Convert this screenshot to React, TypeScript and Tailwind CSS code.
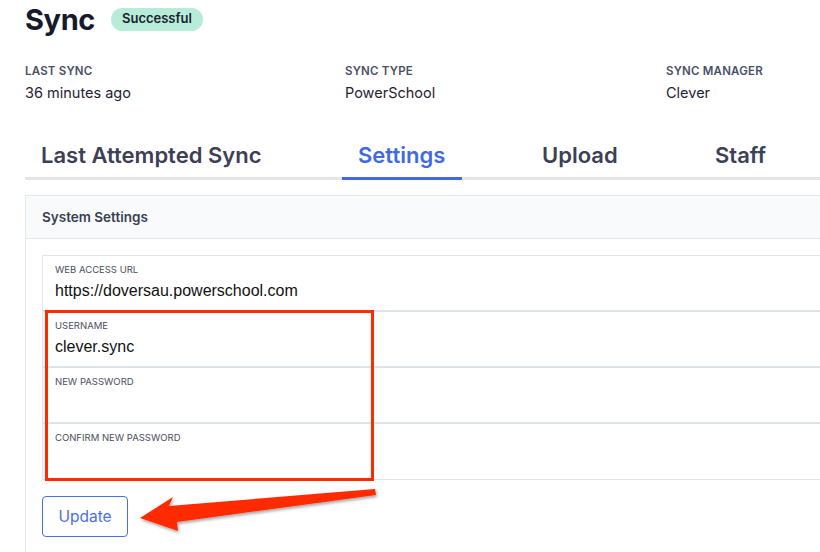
import React from "react";

const meta = [
  { label: "LAST SYNC", value: "36 minutes ago", x: "w-[320px]" },
  { label: "SYNC TYPE", value: "PowerSchool", x: "w-[321px]" },
  { label: "SYNC MANAGER", value: "Clever", x: "flex-1" },
];

const tabs = [
  { name: "Last Attempted Sync", w: "w-[317px] pl-[16px]", active: false },
  { name: "Settings", w: "w-[120px] pl-[16px]", active: true },
  { name: "Upload", w: "w-[173px] pl-[80px]", active: false },
  { name: "Staff", w: "flex-1 pl-[80px]", active: false },
];

const fields = [
  { label: "WEB ACCESS URL", value: "https://doversau.powerschool.com" },
  { label: "USERNAME", value: "clever.sync" },
  { label: "NEW PASSWORD", value: "" },
  { label: "CONFIRM NEW PASSWORD", value: "" },
];

export default function App() {
  return (
    <div className="relative w-[820px] h-[552px] overflow-hidden bg-white font-['Inter',sans-serif] text-[#1f2233]">
      <div className="pl-[25px]">
        <div className="flex items-center gap-[16px] h-[38px]">
          <h1 className="text-[29px] font-bold leading-none tracking-[-0.4px] text-[#171a2b]">Sync</h1>
          <span className="rounded-full bg-[#b6ecd8] px-[11px] h-[23px] flex items-center text-[13px] font-semibold text-[#1c2030]">
            Successful
          </span>
        </div>

        <div className="flex mt-[26px]">
          {meta.map((m) => (
            <div key={m.label} className={m.x}>
              <div className="text-[11.5px] font-semibold tracking-[0.2px] text-[#4a4f66] leading-[14px]">{m.label}</div>
              <div className="text-[14.5px] mt-[6px] leading-[18px] text-[#1f2233]">{m.value}</div>
            </div>
          ))}
        </div>

        <div className="flex mt-[29px] border-b-[3px] border-[#e3e5e9]">
          {tabs.map((t) => (
            <div key={t.name} className={`${t.w} relative h-[46px]`}>
              <div
                className={`text-[22px] font-semibold leading-[26px] mt-[11px] ${t.active ? "text-[#4169e6]" : "text-[#3c4054]"}`}
              >
                {t.name}
              </div>
              {t.active && <div className="absolute left-0 right-0 bottom-[-3px] h-[3px] bg-[#4169e6]" />}
            </div>
          ))}
        </div>

        <div className="mt-[15px] border border-[#e6e8ec] border-r-0 bg-white">
          <div className="h-[43px] bg-[#f9fafc] border-b border-[#e3e6ea] flex items-center pl-[16px]">
            <span className="text-[13.5px] font-semibold text-[#3a3e52]">System Settings</span>
          </div>
          <div className="pl-[16px] pt-[16px] pb-[20px]">
            <div className="border-t border-l border-[#e4e4e6]">
              {fields.map((f, i) => (
                <div
                  key={f.label}
                  className={`h-[56px] pl-[12px] pt-[8px] ${i < fields.length - 1 ? "border-b-2 border-[#dfe3e8]" : "border-b border-[#e2e2ea]"}`}
                >
                  <div className="text-[9.5px] leading-[12px] text-[#4a4e60]">{f.label}</div>
                  <div className="mt-[5px] text-[16px] leading-[19px] font-['Liberation_Sans',Arial,sans-serif] text-[#111]">
                    {f.value}
                  </div>
                </div>
              ))}
            </div>
            <button className="mt-[16px] w-[86px] h-[41px] rounded-[4px] border border-[#4a70e8] text-[15.5px] text-[#4a70e8] bg-white">
              Update
            </button>
          </div>
        </div>
      </div>

      {/* annotation box */}
      <div className="absolute left-[45px] top-[310px] w-[329px] h-[171px] border-[3px] border-[#ff2a00] pointer-events-none" />

      {/* annotation arrow */}
      <svg className="absolute left-0 top-0 pointer-events-none" width="820" height="552">
        <defs>
          <filter id="sh" x="-10%" y="-30%" width="120%" height="160%">
            <feDropShadow dx="1" dy="2" stdDeviation="1.5" floodColor="#000" floodOpacity="0.35" />
          </filter>
        </defs>
        <polygon
          points="140,518 173,497 169,506 375,489 376,495 177,522 178,531"
          fill="#ff2a00"
          filter="url(#sh)"
        />
      </svg>
    </div>
  );
}
